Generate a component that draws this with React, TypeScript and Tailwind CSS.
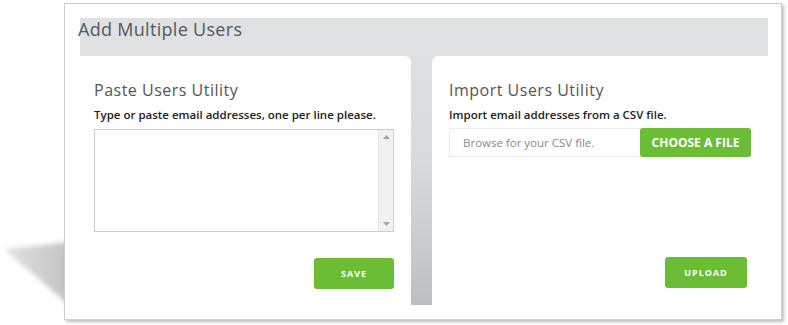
import React from "react";

const heading = { fontFamily: '"Open Sans", "Noto Sans", sans-serif' };

function GreenButton({ label, className }: { label: string; className: string }) {
  return (
    <button
      className={`flex items-center justify-center rounded-[3px] bg-[#6bbd36] font-bold text-white ${className}`}
    >
      {label}
    </button>
  );
}

function Scrollbar() {
  return (
    <div className="flex w-[15px] flex-col items-center justify-between border-l border-[#e4e4e4] bg-[#f1f1f1] py-[5px]">
      <svg width="7" height="4" viewBox="0 0 7 4">
        <path d="M0 4 L3.5 0 L7 4 Z" fill="#a3a3a3" />
      </svg>
      <svg width="7" height="4" viewBox="0 0 7 4">
        <path d="M0 0 L3.5 4 L7 0 Z" fill="#a3a3a3" />
      </svg>
    </div>
  );
}

export default function App() {
  return (
    <div
      className="relative h-[325px] w-[788px] overflow-hidden bg-white"
      style={{ fontFamily: '"Open Sans", sans-serif' }}
    >
      {/* drop shadow of the screenshot */}
      <svg className="absolute left-0 top-[230px]" width="80" height="90">
        <defs>
          <filter id="blur" x="-20%" y="-20%" width="140%" height="140%">
            <feGaussianBlur stdDeviation="2.5" />
          </filter>
          <linearGradient id="shade" x1="0" y1="0" x2="1" y2="0">
            <stop offset="0" stopColor="#e2e2e2" />
            <stop offset="1" stopColor="#c2c2c2" />
          </linearGradient>
        </defs>
        <polygon points="4,19 70,12 70,76" fill="url(#shade)" filter="url(#blur)" />
      </svg>

      <div className="relative ml-[64px] mt-[3px] h-[317px] w-[718px] border border-[#cfcfcf] bg-white px-[15px] pt-[14px] shadow-[2px_2px_3px_rgba(0,0,0,0.25)]">
        <div className="flex h-[287px] w-[688px] flex-col bg-gradient-to-b from-[#dfe1e2] via-[#d8dadb] to-[#bdbfc0]">
          <div className="flex h-[38px] items-start bg-[#dfe1e2]">
            <h1
              className="-ml-[2px] text-[18px] leading-[22px] tracking-[0.3px] text-[#505a5f]"
              style={heading}
            >
              Add Multiple Users
            </h1>
          </div>

          <div className="flex flex-1 gap-[21px]">
            {/* Paste utility */}
            <div className="flex w-[331px] flex-col rounded-tr-[6px] bg-white pl-[14px] pr-[17px] pt-[23px]">
              <h2 className="text-[16px] leading-[22px] tracking-[0.5px] text-[#555]" style={heading}>
                Paste Users Utility
              </h2>
              <p className="mt-[6px] text-[11.5px] font-semibold leading-[16px] text-[#222]">
                Type or paste email addresses, one per line please.
              </p>
              <div className="mt-[6px] flex h-[103px] w-[300px] border border-[#cdcdcd] bg-white">
                <div className="flex-1" />
                <Scrollbar />
              </div>
              <div className="mt-[26px] flex justify-end">
                <GreenButton label="SAVE" className="h-[31px] w-[80px] text-[9px] tracking-[1px]" />
              </div>
            </div>

            {/* Import utility */}
            <div className="flex w-[336px] flex-col rounded-tl-[6px] bg-white pl-[17px] pr-[21px] pt-[23px]">
              <h2 className="text-[16px] leading-[22px] tracking-[0.5px] text-[#555]" style={heading}>
                Import Users Utility
              </h2>
              <p className="mt-[6px] text-[11.5px] font-semibold leading-[16px] text-[#222]">
                Import email addresses from a CSV file.
              </p>
              <div className="mt-[5px] flex h-[29px] w-[302px] border border-[#ececec]">
                <div className="flex flex-1 items-center pl-[13px] text-[11.5px] text-[#8a8a8a]">
                  Browse for your CSV file.
                </div>
                <GreenButton
                  label="CHOOSE A FILE"
                  className="-my-px -mr-px h-[29px] w-[111px] text-[12px]"
                />
              </div>
              <div className="mt-[100px] flex justify-end">
                <GreenButton label="UPLOAD" className="h-[31px] w-[82px] text-[9px] tracking-[1px]" />
              </div>
            </div>
          </div>
        </div>
      </div>
    </div>
  );
}
